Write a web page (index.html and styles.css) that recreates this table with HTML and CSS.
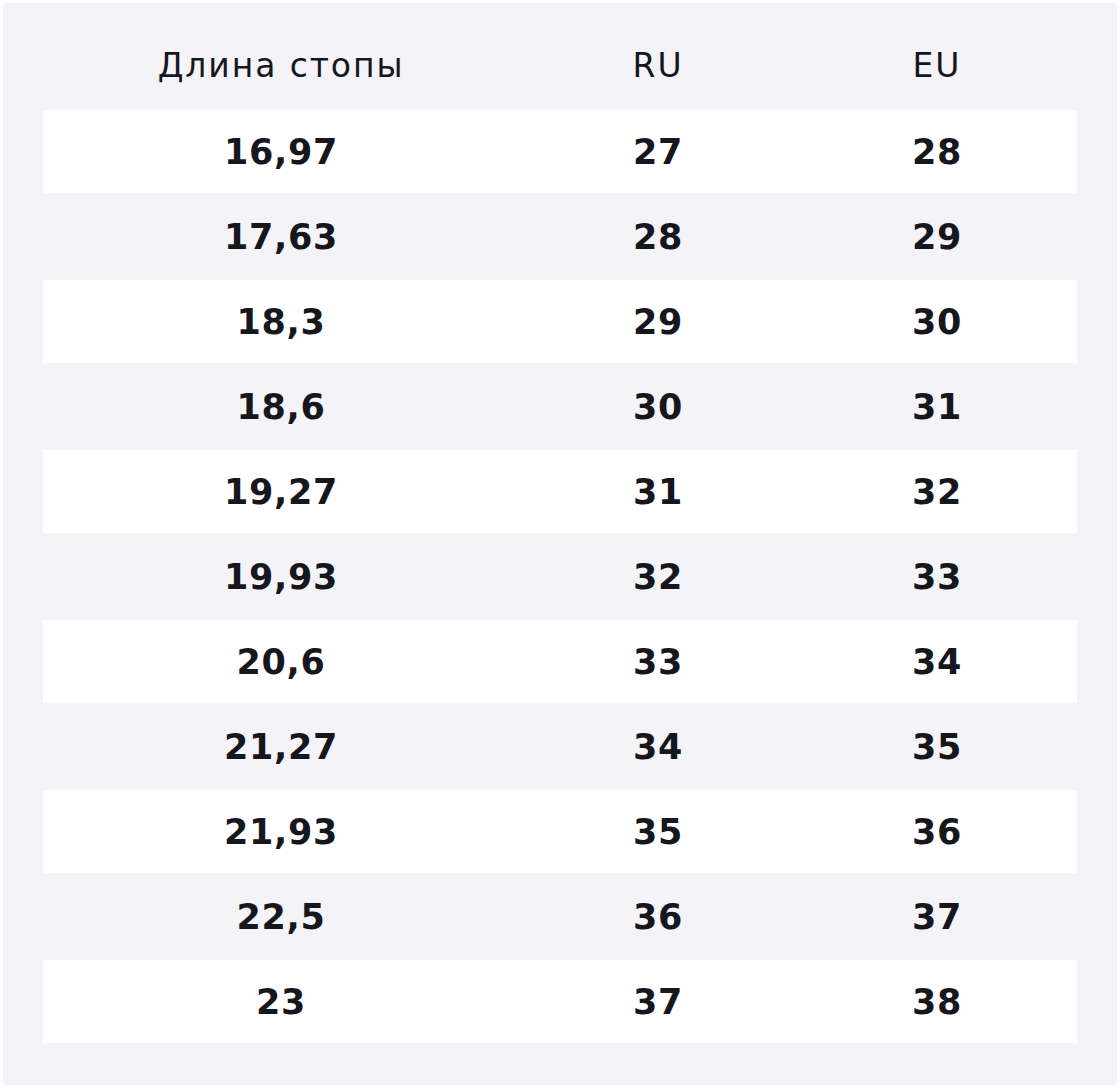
FILE: index.html
```html
<!DOCTYPE html>
<html lang="ru">
<head>
<meta charset="utf-8">
<title>Таблица размеров</title>
<link rel="stylesheet" href="styles.css">
</head>
<body>
<div class="sizes">
  <div class="row head"><div>Длина стопы</div><div>RU</div><div>EU</div></div>
  <div class="row odd"><div>16,97</div><div>27</div><div>28</div></div>
  <div class="row"><div>17,63</div><div>28</div><div>29</div></div>
  <div class="row odd"><div>18,3</div><div>29</div><div>30</div></div>
  <div class="row"><div>18,6</div><div>30</div><div>31</div></div>
  <div class="row odd"><div>19,27</div><div>31</div><div>32</div></div>
  <div class="row"><div>19,93</div><div>32</div><div>33</div></div>
  <div class="row odd"><div>20,6</div><div>33</div><div>34</div></div>
  <div class="row"><div>21,27</div><div>34</div><div>35</div></div>
  <div class="row odd"><div>21,93</div><div>35</div><div>36</div></div>
  <div class="row"><div>22,5</div><div>36</div><div>37</div></div>
  <div class="row odd"><div>23</div><div>37</div><div>38</div></div>
</div>
</body>
</html>
```
FILE: styles.css
```css
html, body {
  margin: 0;
  background: #ffffff;
}
body {
  padding: 3px;
  font-family: "DejaVu Sans", sans-serif;
  color: #16161d;
}
.sizes {
  width: 1114px;
  height: 1082px;
  box-sizing: border-box;
  background: #f3f3f8;
  padding: 21px 40px 41px;
}
.row {
  display: grid;
  grid-template-columns: 476px 278px 1fr;
  height: 85px;
  box-sizing: border-box;
  border-top: 1px solid #f3f3f8;
  border-bottom: 1px solid #f3f3f8;
  font-size: 35px;
  font-weight: bold;
  letter-spacing: 0.7px;
}
.row > div {
  display: flex;
  align-items: center;
  justify-content: center;
}
.row.odd {
  background: #ffffff;
}
.row.head {
  border: 0;
  padding-bottom: 3px;
  font-size: 33px;
  font-weight: normal;
  letter-spacing: 1.9px;
}
```
